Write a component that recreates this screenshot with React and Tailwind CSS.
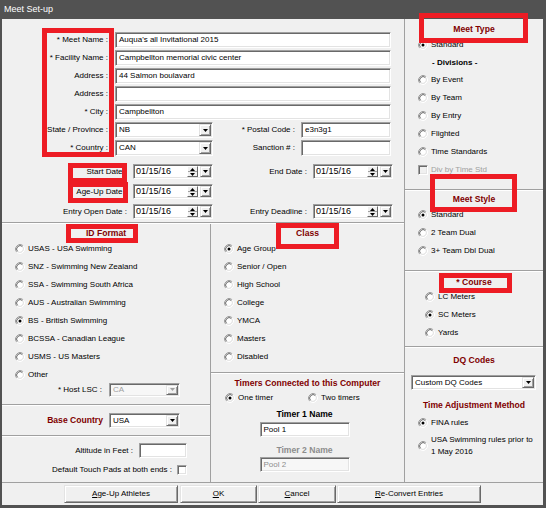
const sunken =
  'border border-t-[#a0a0a0] border-l-[#a0a0a0] border-r-white border-b-white shadow-[inset_1px_1px_0_#696969,inset_-1px_-1px_0_#e3e3e3]';
const raised =
  'border border-t-[#e3e3e3] border-l-[#e3e3e3] border-r-[#696969] border-b-[#696969] bg-[#f0f0f0] shadow-[inset_1px_1px_0_#fff,inset_-1px_-1px_0_#a0a0a0]';

function Arrow({ up, color = '#000' }) {
  return (
    <svg width="5" height="3" viewBox="0 0 5 3" className="shrink-0">
      <path d={up ? 'M0 3H5L2.5 0Z' : 'M0 0H5L2.5 3Z'} fill={color} />
    </svg>
  );
}

function RadioDot({ checked }) {
  return (
    <svg width="10" height="10" viewBox="0 0 10 10" className="shrink-0">
      <circle cx="5" cy="5" r="3.3" fill="#fff" />
      <path d="M1.82 8.18A4.5 4.5 0 0 1 8.18 1.82" fill="none" stroke="#a0a0a0" />
      <path d="M8.18 1.82A4.5 4.5 0 0 1 1.82 8.18" fill="none" stroke="#fff" />
      <path d="M2.53 7.47A3.5 3.5 0 0 1 7.47 2.53" fill="none" stroke="#696969" />
      <path d="M7.47 2.53A3.5 3.5 0 0 1 2.53 7.47" fill="none" stroke="#e3e3e3" />
      {checked && <circle cx="5" cy="5" r="1.5" fill="#000" />}
    </svg>
  );
}

function Radio({ label, checked, className = '' }) {
  return (
    <div className={`flex items-center h-[18px] whitespace-nowrap ${className}`}>
      <RadioDot checked={checked} />
      <span className="ml-[3px]">{label}</span>
    </div>
  );
}

function CheckBox({ disabled }) {
  return (
    <div className={`${sunken} w-[10px] h-[10px] shrink-0 ${disabled ? 'bg-[#f0f0f0]' : 'bg-white'}`} />
  );
}

function TextBox({ value, className = '', disabled }) {
  return (
    <div
      className={`${sunken} flex items-center pl-[3px] whitespace-nowrap overflow-hidden ${
        disabled ? 'bg-[#f7f7f7] text-[#8d8d8d]' : 'bg-white'
      } ${className}`}
    >
      {value}
    </div>
  );
}

function Select({ value, className = '', disabled }) {
  return (
    <div className={`${sunken} flex items-stretch ${disabled ? 'bg-[#f7f7f7] text-[#a0a0a0]' : 'bg-white'} ${className}`}>
      <div className="flex-1 flex items-center pl-[3px]">{value}</div>
      <div className={`${raised} w-[12px] m-[1px] flex items-center justify-center`}>
        <Arrow color={disabled ? '#a0a0a0' : '#000'} />
      </div>
    </div>
  );
}

function DatePicker({ value }) {
  return (
    <div className={`${sunken} bg-white flex items-stretch w-[80px] h-[15px] text-[9px]`}>
      <div className="flex-1 flex items-center pl-[2px]">{value}</div>
      <div className="w-[11px] my-[1px] flex flex-col bg-[#f0f0f0] border border-r-[#696969] border-b-[#696969] border-t-white border-l-white">
        <div className="flex-1 flex items-center justify-center border-b border-[#a0a0a0]">
          <Arrow up />
        </div>
        <div className="flex-1 flex items-center justify-center">
          <Arrow />
        </div>
      </div>
      <div className={`${raised} w-[11px] ml-[2px] my-[1px] mr-[1px] flex items-center justify-center`}>
        <Arrow />
      </div>
    </div>
  );
}

function Title({ children, className = '' }) {
  return (
    <div className={`flex items-center justify-center font-bold text-[8.6px] text-[#800000] whitespace-nowrap ${className}`}>
      {children}
    </div>
  );
}

function FieldRow({ label, children }) {
  return (
    <div className="flex items-center h-[16px]">
      <div className="w-[106px] text-right whitespace-nowrap">{label}</div>
      <div className="ml-[7px] flex items-center">{children}</div>
    </div>
  );
}

function DateRow({ left, right, leftValue, rightValue }) {
  return (
    <div className="flex items-center h-[15px]">
      <div className="w-[125px] text-right whitespace-nowrap">{left}</div>
      <div className="ml-[6px]">
        <DatePicker value={leftValue} />
      </div>
      {right && (
        <>
          <div className="w-[94px] text-right whitespace-nowrap">{right}</div>
          <div className="ml-[6px]">
            <DatePicker value={rightValue} />
          </div>
        </>
      )}
    </div>
  );
}

function TopForm() {
  return (
    <div className="h-[204px] shrink-0 border-b border-[#a0a0a0] flex flex-col pt-[13px]">
      <div className="flex flex-col gap-[2px]">
        <FieldRow label="* Meet Name :">
          <TextBox className="w-[276px] h-[16px]" value="Auqua's all Invitational 2015" />
        </FieldRow>
        <FieldRow label="* Facility Name :">
          <TextBox className="w-[276px] h-[16px]" value="Campbellton memorial civic center" />
        </FieldRow>
        <FieldRow label="Address :">
          <TextBox className="w-[276px] h-[16px]" value="44 Salmon boulavard" />
        </FieldRow>
        <FieldRow label="Address :">
          <TextBox className="w-[276px] h-[16px]" value="" />
        </FieldRow>
        <FieldRow label="* City :">
          <TextBox className="w-[276px] h-[16px]" value="Campbellton" />
        </FieldRow>
        <FieldRow label="State / Province :">
          <Select className="w-[98px] h-[16px]" value="NB" />
          <div className="w-[82px] text-right whitespace-nowrap">* Postal Code :</div>
          <TextBox className="ml-[6px] w-[90px] h-[16px]" value="e3n3g1" />
        </FieldRow>
        <FieldRow label="* Country :">
          <Select className="w-[98px] h-[16px]" value="CAN" />
          <div className="w-[82px] text-right whitespace-nowrap">Sanction # :</div>
          <TextBox className="ml-[6px] w-[90px] h-[16px]" value="" />
        </FieldRow>
      </div>
      <div className="mt-[8px] flex flex-col gap-[5px]">
        <DateRow left="Start Date :" leftValue="01/15/16" right="End Date :" rightValue="01/15/16" />
        <DateRow left="Age-Up Date :" leftValue="01/15/16" />
        <DateRow left="Entry Open Date :" leftValue="01/15/16" right="Entry Deadline :" rightValue="01/15/16" />
      </div>
    </div>
  );
}

const ID_FORMATS = [
  'USAS - USA Swimming',
  'SNZ - Swimming New Zealand',
  'SSA - Swimming South Africa',
  'AUS - Australian Swimming',
  'BS - British Swimming',
  'BCSSA - Canadian League',
  'USMS - US Masters',
  'Other',
];

const CLASSES = ['Age Group', 'Senior / Open', 'High School', 'College', 'YMCA', 'Masters', 'Disabled'];

function LowerLeft() {
  return (
    <div className="h-[259px] shrink-0 border-t border-white flex">
      <div className="w-[208px] shrink-0 flex flex-col">
        <div className="h-[181px] shrink-0 border-b border-[#a0a0a0] flex flex-col pt-[2px]">
          <Title className="h-[14px]">ID Format</Title>
          <div className="flex flex-col pl-[13px]">
            {ID_FORMATS.map((f) => (
              <Radio key={f} label={f} checked={f.startsWith('BS')} />
            ))}
          </div>
          <div className="-mt-[2px] h-[15px] flex items-center">
            <div className="w-[100px] text-right whitespace-nowrap">* Host LSC :</div>
            <Select disabled className="ml-[7px] w-[71px] h-[14px]" value="CA" />
          </div>
        </div>
        <div className="h-[31px] shrink-0 border-t border-white border-b border-b-[#a0a0a0] flex items-center">
          <div className="w-[101px] text-right font-bold text-[8.6px] text-[#800000] whitespace-nowrap">Base Country</div>
          <Select className="ml-[6px] w-[71px] h-[15px]" value="USA" />
        </div>
        <div className="flex-1 border-t border-white flex flex-col pt-[6px]">
          <div className="h-[15px] flex items-center">
            <div className="w-[131px] text-right whitespace-nowrap">Altitude in Feet :</div>
            <TextBox className="ml-[6px] w-[48px] h-[15px]" value="" />
          </div>
          <div className="mt-[6px] h-[12px] flex items-center">
            <div className="w-[170px] text-right whitespace-nowrap">Default Touch Pads at both ends :</div>
            <div className="ml-[5px]">
              <CheckBox />
            </div>
          </div>
        </div>
      </div>
      <div className="flex-1 border-l border-[#a0a0a0] flex flex-col">
        <div className="h-[149px] shrink-0 border-b border-[#a0a0a0] flex flex-col pt-[2px]">
          <Title className="h-[14px]">Class</Title>
          <div className="flex flex-col pl-[13px]">
            {CLASSES.map((c) => (
              <Radio key={c} label={c} checked={c === 'Age Group'} />
            ))}
          </div>
        </div>
        <div className="flex-1 border-t border-white flex flex-col pt-[2px]">
          <Title className="h-[14px]">Timers Connected to this Computer</Title>
          <div className="mt-[1px] h-[14px] flex items-center pl-[14px]">
            <Radio className="w-[83px] h-[14px]" label="One timer" checked />
            <Radio className="h-[14px]" label="Two timers" />
          </div>
          <div className="flex flex-col items-center pr-[6px]">
            <div className="mt-[3px] h-[12px] flex items-center font-bold text-[8.6px]">Timer 1 Name</div>
            <TextBox className="mt-[2px] w-[90px] h-[15px]" value="Pool 1" />
            <div className="mt-[7px] h-[12px] flex items-center font-bold text-[8.6px] text-[#8d8d8d]">Timer 2 Name</div>
            <TextBox disabled className="mt-[1px] w-[90px] h-[15px]" value="Pool 2" />
          </div>
        </div>
      </div>
    </div>
  );
}

function RightColumn() {
  return (
    <div className="flex-1 border-l border-[#a0a0a0] flex flex-col">
      <div className="h-[171px] shrink-0 border-b border-[#a0a0a0] flex flex-col pt-[3px]">
        <Title className="h-[14px]">Meet Type</Title>
        <div className="pl-[13px] flex flex-col">
          <Radio label="Standard" checked />
        </div>
        <div className="h-[17px] flex items-center pl-[27px] font-bold">- Divisions -</div>
        <div className="pl-[13px] flex flex-col">
          {['By Event', 'By Team', 'By Entry', 'Flighted', 'Time Standards'].map((d) => (
            <Radio key={d} label={d} />
          ))}
          <div className="h-[18px] flex items-center">
            <CheckBox disabled />
            <span className="ml-[3px] text-[#a0a0a0]">Div by Time Std</span>
          </div>
        </div>
      </div>
      <div className="h-[81px] shrink-0 border-t border-white border-b border-b-[#a0a0a0] flex flex-col pt-[2px]">
        <Title className="h-[13px]">Meet Style</Title>
        <div className="pl-[13px] flex flex-col">
          <Radio label="Standard" checked />
          <Radio label="2 Team Dual" />
          <Radio label="3+ Team Dbl Dual" />
        </div>
      </div>
      <div className="h-[76px] shrink-0 border-t border-white border-b border-b-[#a0a0a0] flex flex-col pt-[3px]">
        <Title className="h-[14px]">* Course</Title>
        <div className="pl-[20px] -mt-[1px] flex flex-col">
          <Radio label="LC Meters" />
          <Radio label="SC Meters" checked />
          <Radio label="Yards" />
        </div>
      </div>
      <div className="flex-1 border-t border-white flex flex-col pt-[5px]">
        <Title className="h-[14px]">DQ Codes</Title>
        <Select className="mt-[8px] ml-[6px] w-[125px] h-[15px]" value="Custom DQ Codes" />
        <Title className="mt-[8px] h-[14px]">Time Adjustment Method</Title>
        <div className="pl-[13px] mt-[2px] flex flex-col">
          <Radio label="FINA rules" checked />
          <div className="mt-[2px] h-[24px] flex items-center">
            <RadioDot />
            <span className="ml-[3px] leading-[12px]">
              USA Swimming rules prior to
              <br />1 May 2016
            </span>
          </div>
        </div>
      </div>
    </div>
  );
}

function Btn({ children, className = '' }) {
  return (
    <div className={`${raised} h-[18px] flex items-center justify-center whitespace-nowrap ${className}`}>{children}</div>
  );
}

function ButtonBar() {
  return (
    <div className="flex-1 border-t border-[#a0a0a0] flex items-start pt-[2px] pl-[62px]">
      <Btn className="w-[114px]">
        <span className="underline">A</span>ge-Up Athletes
      </Btn>
      <Btn className="w-[77px] ml-[2px]">
        <span className="underline">O</span>K
      </Btn>
      <Btn className="w-[78px] ml-[1px]">
        <span className="underline">C</span>ancel
      </Btn>
      <Btn className="w-[144px] ml-[1px]">
        <span className="underline">R</span>e-Convert Entries
      </Btn>
    </div>
  );
}

const MARKS = [
  'left-[42px] top-[28px] w-[72px] h-[129px]',
  'left-[68px] top-[163px] w-[59px] h-[20px]',
  'left-[68px] top-[182px] w-[60px] h-[21px]',
  'left-[66px] top-[224px] w-[72px] h-[19px]',
  'left-[276px] top-[223px] w-[63px] h-[26px]',
  'left-[419px] top-[13px] w-[109px] h-[30px]',
  'left-[430px] top-[174px] w-[87px] h-[38px]',
  'left-[439px] top-[273px] w-[73px] h-[20px]',
];

export default function App() {
  return (
    <div className="relative w-[546px] h-[508px] bg-[#525252] flex flex-col font-['Liberation_Sans',Arial,sans-serif] text-[8px] leading-none text-black overflow-hidden">
      <div className="h-[19px] shrink-0 flex items-center pl-[4px] text-[9px] text-white">Meet Set-up</div>
      <div className="flex-1 ml-[2px] mr-[3px] mb-[3px] bg-[#f0f0f0] flex flex-col">
        <div className="h-[463px] shrink-0 flex">
          <div className="w-[402px] shrink-0 flex flex-col">
            <TopForm />
            <LowerLeft />
          </div>
          <RightColumn />
        </div>
        <ButtonBar />
      </div>
      {MARKS.map((m) => (
        <div key={m} className={`absolute border-[5px] border-[#ed1c24] ${m}`} />
      ))}
    </div>
  );
}
